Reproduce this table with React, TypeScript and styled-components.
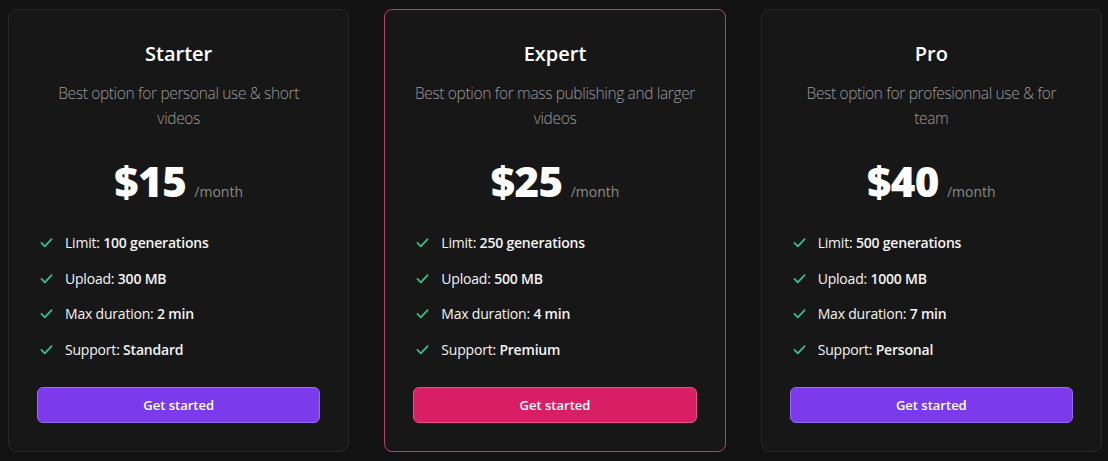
import React from 'react'
import styled, {createGlobalStyle} from 'styled-components'

const GlobalStyle = createGlobalStyle`
  html, body {
    margin: 0;
    padding: 0;
    background: #121212;
  }
  body {
    font-family: 'Open Sans', 'Noto Sans', sans-serif;
    -webkit-font-smoothing: antialiased;
  }
`

type Accent = 'violet' | 'pink'

const accentFill: Record<Accent, string> = {
  violet: '#7c3aed',
  pink: '#d81f65',
}

const accentEdge: Record<Accent, string> = {
  violet: '#9a6af5',
  pink: '#ee4d88',
}

const PricingGrid = styled.div`
  display: grid;
  grid-template-columns: repeat(3, 1fr);
  gap: 35px;
  padding: 9px 6px 9px 8px;
`

const Card = styled.section<{highlighted: boolean}>`
  display: flex;
  flex-direction: column;
  align-items: center;
  box-sizing: border-box;
  height: 443px;
  padding: 30px 28px 28px;
  background: #171717;
  border: 1px solid ${(p) => (p.highlighted ? '#b4426f' : '#262626')};
  border-radius: 8px;
`

const Title = styled.h3`
  margin: 0;
  font-size: 20px;
  line-height: 28px;
  font-weight: 600;
  color: #ffffff;
`

const Description = styled.p`
  max-width: 283px;
  margin: 13px 0 0;
  font-size: 15.5px;
  line-height: 25px;
  font-weight: 300;
  color: #9b9b9b;
  text-align: center;
  letter-spacing: -0.35px;
`

const PriceRow = styled.div`
  display: flex;
  align-items: baseline;
  gap: 8px;
  margin-top: 24px;
`

const Amount = styled.span`
  font-size: 42px;
  line-height: 52px;
  font-weight: 800;
  color: #ffffff;
  letter-spacing: -0.5px;
`

const Period = styled.span`
  font-size: 14px;
  color: #8a8a8a;
`

const FeatureList = styled.ul`
  align-self: stretch;
  margin: 25px 0 0;
  padding: 0;
  list-style: none;
  display: flex;
  flex-direction: column;
  gap: 14.7px;
`

const Feature = styled.li`
  display: flex;
  align-items: center;
  gap: 10px;
  padding-left: 1px;
  font-size: 14px;
  line-height: 21px;
  letter-spacing: -0.2px;
  color: #f4f4f4;

  b {
    font-weight: 600;
  }
`

const Check = styled.svg`
  flex: none;
  width: 17px;
  height: 17px;
  color: #34c38f;
`

const StartButton = styled.button<{accent: Accent}>`
  align-self: stretch;
  margin-top: auto;
  height: 36px;
  border: 1px solid ${(p) => accentEdge[p.accent]};
  border-radius: 6px;
  background: ${(p) => accentFill[p.accent]};
  color: #ffffff;
  font-family: inherit;
  font-size: 13px;
  font-weight: 600;
  cursor: pointer;
`

type Plan = {
  name: string
  blurb: string
  price: string
  accent: Accent
  highlighted: boolean
  features: [string, string][]
}

const plans: Plan[] = [
  {
    name: 'Starter',
    blurb: 'Best option for personal use & short videos',
    price: '$15',
    accent: 'violet',
    highlighted: false,
    features: [
      ['Limit: ', '100 generations'],
      ['Upload: ', '300 MB'],
      ['Max duration: ', '2 min'],
      ['Support: ', 'Standard'],
    ],
  },
  {
    name: 'Expert',
    blurb: 'Best option for mass publishing and larger videos',
    price: '$25',
    accent: 'pink',
    highlighted: true,
    features: [
      ['Limit: ', '250 generations'],
      ['Upload: ', '500 MB'],
      ['Max duration: ', '4 min'],
      ['Support: ', 'Premium'],
    ],
  },
  {
    name: 'Pro',
    blurb: 'Best option for profesionnal use & for team',
    price: '$40',
    accent: 'violet',
    highlighted: false,
    features: [
      ['Limit: ', '500 generations'],
      ['Upload: ', '1000 MB'],
      ['Max duration: ', '7 min'],
      ['Support: ', 'Personal'],
    ],
  },
]

const CheckIcon = () => (
  <Check viewBox="0 0 20 20" fill="none">
    <path
      d="M4 10.5l4 4 8-8.5"
      stroke="currentColor"
      strokeWidth="2"
      strokeLinecap="round"
      strokeLinejoin="round"
    />
  </Check>
)

export default function App() {
  return (
    <>
      <GlobalStyle />
      <PricingGrid>
        {plans.map((plan) => (
          <Card key={plan.name} highlighted={plan.highlighted}>
            <Title>{plan.name}</Title>
            <Description>{plan.blurb}</Description>
            <PriceRow>
              <Amount>{plan.price}</Amount>
              <Period>/month</Period>
            </PriceRow>
            <FeatureList>
              {plan.features.map(([label, value]) => (
                <Feature key={label}>
                  <CheckIcon />
                  <span>
                    {label}
                    <b>{value}</b>
                  </span>
                </Feature>
              ))}
            </FeatureList>
            <StartButton accent={plan.accent}>Get started</StartButton>
          </Card>
        ))}
      </PricingGrid>
    </>
  )
}
